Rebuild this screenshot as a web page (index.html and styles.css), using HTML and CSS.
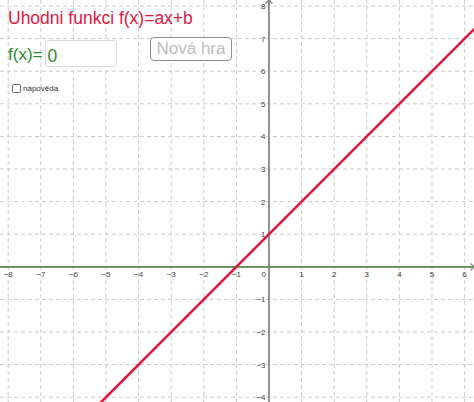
FILE: index.html
```html
<!DOCTYPE html>
<html lang="cs">
<head>
<meta charset="utf-8">
<title>Uhodni funkci</title>
<link rel="stylesheet" href="styles.css">
</head>
<body>
<div class="app">
  <svg class="graph" width="474" height="402" viewBox="0 0 474 402" xmlns="http://www.w3.org/2000/svg">
    <path class="grid" d="M8.2 0V402M40.8 0V402M73.4 0V402M106 0V402M138.6 0V402M171.2 0V402M203.8 0V402M236.4 0V402M301.6 0V402M334.2 0V402M366.8 0V402M399.4 0V402M432 0V402M464.6 0V402"/>
    <path class="grid" d="M0 6H474M0 38.6H474M0 71.2H474M0 103.8H474M0 136.4H474M0 169H474M0 201.6H474M0 234.2H474M0 299.4H474M0 332H474M0 364.6H474M0 397.2H474"/>
    <path class="axis" d="M269 0V402M0 266.8H474"/>
    <path class="arrow" d="M265.5 3.5L269 0L272.5 3.5M470.5 263.3L474 266.8L470.5 270.3"/>
    <path class="guess" d="M0 266.8H472"/>
    <path class="fn" d="M-1.6 504.8L474.4 28.8"/>
    <g class="xlab">
      <text x="8.2" y="276.5">−8</text>
      <text x="40.8" y="276.5">−7</text>
      <text x="73.4" y="276.5">−6</text>
      <text x="106" y="276.5">−5</text>
      <text x="138.6" y="276.5">−4</text>
      <text x="171.2" y="276.5">−3</text>
      <text x="203.8" y="276.5">−2</text>
      <text x="236.4" y="276.5">−1</text>
      <text x="301.6" y="276.5">1</text>
      <text x="334.2" y="276.5">2</text>
      <text x="366.8" y="276.5">3</text>
      <text x="399.4" y="276.5">4</text>
      <text x="432" y="276.5">5</text>
      <text x="464.6" y="276.5">6</text>
    </g>
    <g class="ylab">
      <text x="266" y="276.5">0</text>
      <text x="265.5" y="9">8</text>
      <text x="265.5" y="41.6">7</text>
      <text x="265.5" y="74.2">6</text>
      <text x="265.5" y="106.8">5</text>
      <text x="265.5" y="139.4">4</text>
      <text x="265.5" y="172">3</text>
      <text x="265.5" y="204.6">2</text>
      <text x="265.5" y="237.2">1</text>
      <text x="265.5" y="302.4">−1</text>
      <text x="265.5" y="335">−2</text>
      <text x="265.5" y="367.6">−3</text>
      <text x="265.5" y="400.2">−4</text>
    </g>
  </svg>
  <div class="panel">
    <div class="title">Uhodni funkci f(x)=ax+b</div>
    <div class="row">
      <span class="fx">f(x)=</span>
      <div class="input">0</div>
      <button class="btn" type="button">Nová hra</button>
    </div>
    <label class="hint"><span class="box"></span><span class="hint-text">nápověda</span></label>
  </div>
</div>
</body>
</html>
```

FILE: styles.css
```css
html, body {
  margin: 0;
  padding: 0;
  background: #ffffff;
}

.app {
  position: relative;
  width: 474px;
  height: 402px;
  overflow: hidden;
  background: #ffffff;
  font-family: "Liberation Sans", Arial, sans-serif;
}

.graph {
  position: absolute;
  left: 0;
  top: 0;
  display: block;
}

.grid {
  fill: none;
  stroke: #cbcbcb;
  stroke-width: 1;
  stroke-dasharray: 4 3;
}

.axis {
  fill: none;
  stroke: #7a7a7a;
  stroke-width: 1.6;
}

.arrow {
  fill: none;
  stroke: #7a7a7a;
  stroke-width: 1.2;
}

.guess {
  fill: none;
  stroke: #5e8f50;
  stroke-width: 1.8;
}

.fn {
  fill: none;
  stroke: #e0173f;
  stroke-width: 2.6;
}

.xlab text,
.ylab text {
  font-family: "Liberation Sans", Arial, sans-serif;
  font-size: 8px;
  fill: #444444;
}

.xlab text {
  text-anchor: middle;
}

.ylab text {
  text-anchor: end;
}

.panel {
  position: relative;
  display: flex;
  flex-direction: column;
  align-items: flex-start;
  padding: 8px 0 0 8px;
}

.title {
  font-size: 17.5px;
  line-height: 20px;
  color: #e0173f;
  white-space: nowrap;
}

.row {
  display: flex;
  align-items: flex-start;
  margin-top: 12px;
}

.fx {
  font-size: 17px;
  line-height: 20px;
  padding-top: 5px;
  color: #2f8a2f;
  white-space: nowrap;
}

.input {
  box-sizing: border-box;
  width: 72px;
  height: 27px;
  margin-left: 2.5px;
  padding: 5px 0 0 1.5px;
  border: 1px solid #dcdcdc;
  border-radius: 3px;
  background: #ffffff;
  font-size: 17.5px;
  line-height: 20px;
  color: #2f8a2f;
}

.btn {
  box-sizing: border-box;
  width: 82px;
  height: 24px;
  margin: -3px 0 0 33px;
  padding: 0;
  border: 1.5px solid #8e8e8e;
  border-radius: 4px;
  background: #ffffff;
  font-family: "Liberation Sans", Arial, sans-serif;
  font-size: 17px;
  line-height: 20px;
  color: #bdbdbd;
}

.hint {
  display: flex;
  align-items: center;
  margin: 17px 0 0 4px;
}

.box {
  box-sizing: border-box;
  width: 9px;
  height: 9px;
  border: 1px solid #666666;
  border-radius: 1.5px;
  background: #ffffff;
}

.hint-text {
  margin-left: 2px;
  font-size: 8px;
  line-height: 9px;
  color: #333333;
}
```
